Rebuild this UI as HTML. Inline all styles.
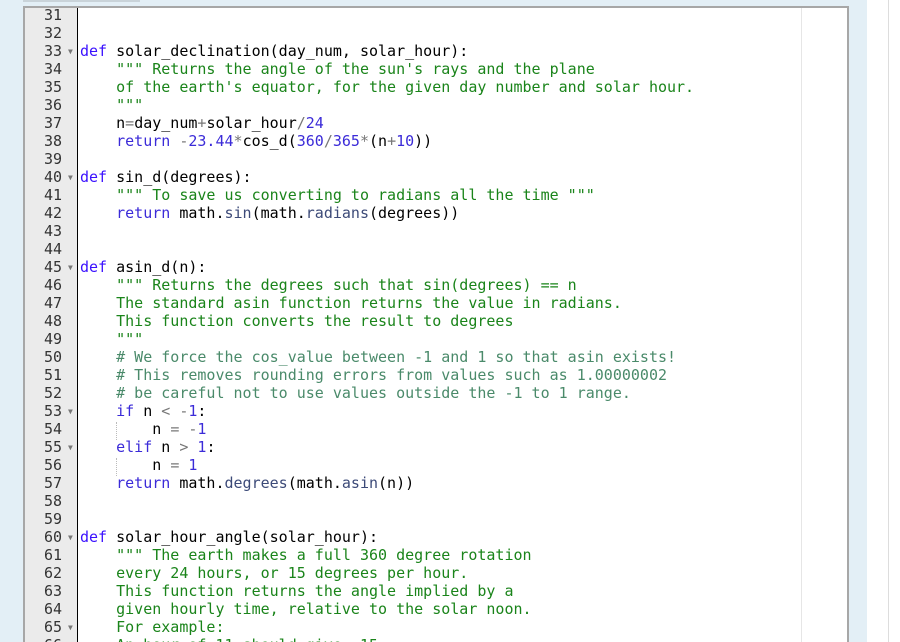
<!DOCTYPE html>
<html><head><meta charset="utf-8"><style>
html,body{margin:0;width:900px;height:642px;overflow:hidden;}
body{background:#fff;position:relative;font-family:"DejaVu Sans Mono","Liberation Mono",monospace;}
.bg{position:absolute;left:0;top:0;width:867px;height:642px;background:#e3eff6;}
.tab{position:absolute;left:23px;top:0;width:117px;height:2px;background:#c9d3d9;}
.rl{position:absolute;left:888px;top:0;width:1px;height:642px;background:#ddd;}
.ed{position:absolute;left:23px;top:6px;width:822px;height:636px;border:2px solid #a7a7a7;border-bottom:none;background:#fff;overflow:hidden;}
.gut{position:absolute;left:0;top:0;width:52px;height:100%;background:#ebebeb;border-right:1px solid #000;}
.pm{position:absolute;left:776px;top:0;width:1px;height:100%;background:#e6e6e6;}
.ln{position:absolute;left:0;width:37px;text-align:right;font-size:15px;color:#333;line-height:18px;}
.fd{position:absolute;left:43px;font-size:8px;color:#777;line-height:18px;}
.code{position:absolute;left:55px;top:0;font-size:15px;line-height:18px;white-space:pre;color:#000;}
.k{color:#3b2bd8}.d{color:#3a10ff}.s{color:#1a841a}.n{color:#3b2bd8}.o{color:#777}.c{color:#4a8a6a}.f{color:#3c4a78}
.g{position:absolute;left:91px;width:0;border-left:1px dotted #bbb;}
</style></head><body>
<div class="bg"></div><div class="tab"></div><div class="rl"></div>
<div class="ed">
<div class="gut"></div>
<div class="pm"></div>
<div style="position:absolute;top:-2px;left:0;width:52px">
<div class="ln" style="top:0">31</div><div class="ln" style="top:18px">32</div><div class="ln" style="top:36px">33</div><div class="ln" style="top:54px">34</div><div class="ln" style="top:72px">35</div><div class="ln" style="top:90px">36</div><div class="ln" style="top:108px">37</div><div class="ln" style="top:126px">38</div><div class="ln" style="top:144px">39</div><div class="ln" style="top:162px">40</div><div class="ln" style="top:180px">41</div><div class="ln" style="top:198px">42</div><div class="ln" style="top:216px">43</div><div class="ln" style="top:234px">44</div><div class="ln" style="top:252px">45</div><div class="ln" style="top:270px">46</div><div class="ln" style="top:288px">47</div><div class="ln" style="top:306px">48</div><div class="ln" style="top:324px">49</div><div class="ln" style="top:342px">50</div><div class="ln" style="top:360px">51</div><div class="ln" style="top:378px">52</div><div class="ln" style="top:396px">53</div><div class="ln" style="top:414px">54</div><div class="ln" style="top:432px">55</div><div class="ln" style="top:450px">56</div><div class="ln" style="top:468px">57</div><div class="ln" style="top:486px">58</div><div class="ln" style="top:504px">59</div><div class="ln" style="top:522px">60</div><div class="ln" style="top:540px">61</div><div class="ln" style="top:558px">62</div><div class="ln" style="top:576px">63</div><div class="ln" style="top:594px">64</div><div class="ln" style="top:612px">65</div><div class="ln" style="top:630px">66</div>
<div class="fd" style="top:37px">▼</div><div class="fd" style="top:163px">▼</div><div class="fd" style="top:253px">▼</div><div class="fd" style="top:397px">▼</div><div class="fd" style="top:433px">▼</div><div class="fd" style="top:523px">▼</div><div class="fd" style="top:613px">▼</div>
</div>
<div class="g" style="top:414px;height:18px"></div><div class="g" style="top:450px;height:18px"></div>
<div class="code" style="top:-2px">

<span class="d">def</span> solar_declination(day_num, solar_hour):
    <span class="s">""" Returns the angle of the sun's rays and the plane</span>
<span class="s">    of the earth's equator, for the given day number and solar hour.</span>
<span class="s">    """</span>
    n<span class="o">=</span>day_num<span class="o">+</span>solar_hour<span class="o">/</span><span class="n">24</span>
    <span class="k">return</span> <span class="o">-</span><span class="n">23.44</span><span class="o">*</span>cos_d(<span class="n">360</span><span class="o">/</span><span class="n">365</span><span class="o">*</span>(n<span class="o">+</span><span class="n">10</span>))

<span class="d">def</span> sin_d(degrees):
    <span class="s">""" To save us converting to radians all the time """</span>
    <span class="k">return</span> math.<span class="f">sin</span>(math.<span class="f">radians</span>(degrees))


<span class="d">def</span> asin_d(n):
    <span class="s">""" Returns the degrees such that sin(degrees) == n</span>
<span class="s">    The standard asin function returns the value in radians.</span>
<span class="s">    This function converts the result to degrees</span>
<span class="s">    """</span>
    <span class="c"># We force the cos_value between -1 and 1 so that asin exists!</span>
    <span class="c"># This removes rounding errors from values such as 1.00000002</span>
    <span class="c"># be careful not to use values outside the -1 to 1 range.</span>
    <span class="k">if</span> n <span class="o">&lt;</span> <span class="o">-</span><span class="n">1</span>:
        n <span class="o">=</span> <span class="o">-</span><span class="n">1</span>
    <span class="k">elif</span> n <span class="o">&gt;</span> <span class="n">1</span>:
        n <span class="o">=</span> <span class="n">1</span>
    <span class="k">return</span> math.<span class="f">degrees</span>(math.<span class="f">asin</span>(n))


<span class="d">def</span> solar_hour_angle(solar_hour):
    <span class="s">""" The earth makes a full 360 degree rotation</span>
<span class="s">    every 24 hours, or 15 degrees per hour.</span>
<span class="s">    This function returns the angle implied by a</span>
<span class="s">    given hourly time, relative to the solar noon.</span>
<span class="s">    For example:</span>
<span class="s">    An hour of 11 should give -15</span>
</div>
</div>
</body></html>
